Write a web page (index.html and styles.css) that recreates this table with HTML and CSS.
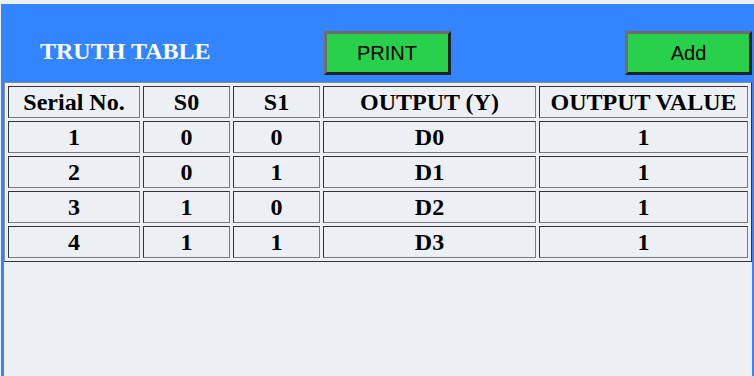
FILE: index.html
```html
<!DOCTYPE html>
<html>
<head>
<meta charset="utf-8">
<link rel="stylesheet" href="styles.css">
</head>
<body>
<div class="panel">
  <div class="header">
    <h2 class="title">TRUTH TABLE</h2>
    <button class="btn btn-print">PRINT</button>
    <button class="btn btn-add">Add</button>
  </div>
  <table class="truth">
    <thead>
      <tr>
        <th class="c1">Serial No.</th>
        <th class="c2">S0</th>
        <th class="c3">S1</th>
        <th class="c4">OUTPUT (Y)</th>
        <th class="c5">OUTPUT VALUE</th>
      </tr>
    </thead>
    <tbody>
      <tr><td>1</td><td>0</td><td>0</td><td>D0</td><td>1</td></tr>
      <tr><td>2</td><td>0</td><td>1</td><td>D1</td><td>1</td></tr>
      <tr><td>3</td><td>1</td><td>0</td><td>D2</td><td>1</td></tr>
      <tr><td>4</td><td>1</td><td>1</td><td>D3</td><td>1</td></tr>
    </tbody>
  </table>
</div>
</body>
</html>
```

FILE: styles.css
```css
html, body {
  margin: 0;
  padding: 0;
  background: #eceff4;
  height: 100%;
}

body {
  padding-top: 4px;
  box-sizing: border-box;
  overflow: hidden;
}

.panel {
  margin-left: 1px;
  border-left: 3px solid #3385ff;
  border-right: 2px solid #3385ff;
  background: #eceff4;
  height: 372px;
}

.header {
  background: #3385ff;
  height: 78px;
  box-sizing: border-box;
  padding: 27px 0 7px 36px;
  display: flex;
  align-items: center;
}

.title {
  margin: 0 0 3px 0;
  font-family: "Liberation Serif", "Times New Roman", serif;
  font-size: 24px;
  font-weight: bold;
  color: #ffffff;
}

.btn {
  width: 127px;
  height: 44px;
  box-sizing: border-box;
  background: #29d14a;
  border-style: solid;
  border-width: 3px;
  border-color: #6e6e6e #222222 #222222 #6e6e6e;
  font-family: "Liberation Sans", Arial, sans-serif;
  font-size: 20px;
  color: #000;
  padding: 0;
}

.btn-print {
  margin-left: 113px;
}

.btn-add {
  margin-left: auto;
}

.truth {
  width: 100%;
  border-collapse: separate;
  border-spacing: 3px;
  border: 1px solid;
  border-color: #8a8a8a #333333 #333333 #8a8a8a;
  background: #eceff4;
  font-family: "Liberation Serif", "Times New Roman", serif;
  font-size: 24px;
  font-weight: bold;
  color: #000;
}

.truth th,
.truth td {
  box-sizing: border-box;
  height: 32px;
  padding: 0 1px;
  line-height: 28px;
  text-align: center;
  border: 1px solid;
  border-color: #333333 #7a7a7a #7a7a7a #333333;
}

.c1 { width: 132px; }
.c2 { width: 87px; }
.c3 { width: 87px; }
.c4 { width: 213px; }
```
